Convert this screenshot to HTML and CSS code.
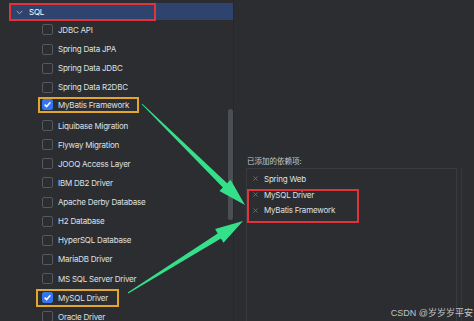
FILE: index.html
```html
<!DOCTYPE html>
<html>
<head>
  <meta charset="utf-8">
  <title>New Project - Dependencies</title>
  <link rel="stylesheet" href="styles.css">
</head>
<body>
  <div class="wizard">
    <div class="tree-pane">
      <div class="group-row">
        <span class="group-label">
          <svg class="chevron" width="7" height="5" viewBox="0 0 7 5"><path d="M0.8 1l2.7 2.7L6.2 1" fill="none" stroke="#aeb1b7" stroke-width="1"/></svg>
          SQL
        </span>
      </div>
      <ul class="dep-list">
        <li class="dep"><span class="checkbox"></span>JDBC API</li>
        <li class="dep"><span class="checkbox"></span>Spring Data JPA</li>
        <li class="dep"><span class="checkbox"></span>Spring Data JDBC</li>
        <li class="dep"><span class="checkbox"></span>Spring Data R2DBC</li>
        <li class="dep">
          <span class="mark mark-mybatis">
            <span class="checkbox checked"><svg width="9" height="9" viewBox="0 0 9 9"><path d="M1.6 4.6l2 2 3.8-4.3" fill="none" stroke="#fff" stroke-width="1.5"/></svg></span>MyBatis Framework
          </span>
        </li>
        <li class="dep"><span class="checkbox"></span>Liquibase Migration</li>
        <li class="dep"><span class="checkbox"></span>Flyway Migration</li>
        <li class="dep"><span class="checkbox"></span>JOOQ Access Layer</li>
        <li class="dep"><span class="checkbox"></span>IBM DB2 Driver</li>
        <li class="dep"><span class="checkbox"></span>Apache Derby Database</li>
        <li class="dep"><span class="checkbox"></span>H2 Database</li>
        <li class="dep"><span class="checkbox"></span>HyperSQL Database</li>
        <li class="dep"><span class="checkbox"></span>MariaDB Driver</li>
        <li class="dep"><span class="checkbox"></span>MS SQL Server Driver</li>
        <li class="dep">
          <span class="mark mark-mysql">
            <span class="checkbox checked"><svg width="9" height="9" viewBox="0 0 9 9"><path d="M1.6 4.6l2 2 3.8-4.3" fill="none" stroke="#fff" stroke-width="1.5"/></svg></span>MySQL Driver
          </span>
        </li>
        <li class="dep"><span class="checkbox"></span>Oracle Driver</li>
      </ul>
      <div class="scroll-thumb"></div>
    </div>

    <div class="added-pane">
      <div class="added-title">已添加的依赖项:</div>
      <div class="added-body">
        <div class="added-list">
          <div class="added-item">
            <svg class="remove" width="5" height="5" viewBox="0 0 5 5"><path d="M0.5 0.5l4 4M4.5 0.5l-4 4" stroke="#6c7077" stroke-width="0.9"/></svg>Spring Web
          </div>
          <div class="added-mark">
            <div class="added-item">
              <svg class="remove" width="5" height="5" viewBox="0 0 5 5"><path d="M0.5 0.5l4 4M4.5 0.5l-4 4" stroke="#6c7077" stroke-width="0.9"/></svg>MySQL Driver
            </div>
            <div class="added-item">
              <svg class="remove" width="5" height="5" viewBox="0 0 5 5"><path d="M0.5 0.5l4 4M4.5 0.5l-4 4" stroke="#6c7077" stroke-width="0.9"/></svg>MyBatis Framework
            </div>
          </div>
        </div>
        <div class="added-rule"></div>
      </div>
    </div>

    <!-- annotation arrows -->
    <svg class="arrows" width="474" height="321" viewBox="0 0 474 321">
      <polygon points="142.35,103.64 227.1,183.3 230.6,179.7 245,205 219.4,191.1 222.9,187.5 141.65,104.36" fill="#35e08a"/>
      <polygon points="127.73,292.58 217.7,233.4 215.1,229.1 243,221 223.5,242.7 220.9,238.4 128.27,293.42" fill="#35e08a"/>
    </svg>

    <div class="watermark">CSDN @岁岁岁平安</div>
  </div>
</body>
</html>
```

FILE: styles.css
```css
body {
  margin: 0;
  background-color: #2b2d30;
  color: #dfe1e5;
  font-family: 'Inter', 'Noto Sans', sans-serif;
  font-size: 8px;
  letter-spacing: -0.22px;
}

.wizard {
  position: relative;
  display: flex;
  width: 474px;
  height: 321px;
  overflow: hidden;
}

/* left: dependency tree */
.tree-pane {
  position: relative;
  flex-shrink: 0;
  width: 233px;
  padding-top: 3px;
  border-right: 1px solid #26282b;
}

.group-row {
  display: flex;
  height: 17.4px;
  margin-left: 9px;
  background-color: #2e436e;
}

.group-label {
  display: flex;
  align-items: center;
  gap: 6px;
  width: 147px;
  height: 18px;
  padding-left: 5px;
  box-sizing: border-box;
  border: 2px solid #e0343b;
  color: #ffffff;
}

.dep-list {
  list-style: none;
  margin: 0;
  padding: 0;
}

.dep {
  display: flex;
  align-items: center;
  gap: 5px;
  height: 19.14px;
  padding-left: 42px;
  white-space: nowrap;
}

.checkbox {
  display: flex;
  align-items: center;
  justify-content: center;
  flex-shrink: 0;
  width: 11px;
  height: 11px;
  box-sizing: border-box;
  border: 1px solid #55585e;
  border-radius: 2px;
}

.checkbox.checked {
  background-color: #3574f0;
  border-color: #3574f0;
}

.mark {
  display: flex;
  align-items: center;
  gap: 5px;
  box-sizing: border-box;
  border: 2px solid #e2a52e;
}

.mark-mybatis {
  height: 16px;
  margin-left: -4px;
  margin-top: -3px;
  padding: 0 8px 0 2px;
}

.mark-mysql {
  height: 18px;
  margin-left: -6px;
  padding: 0 9px 0 4px;
}

.scroll-thumb {
  position: absolute;
  top: 109px;
  right: 0;
  width: 5px;
  height: 111px;
  background-color: #4b4e53;
  border-radius: 3px;
}

/* right: added dependencies */
.added-pane {
  flex: 1;
  display: flex;
  flex-direction: column;
  padding-top: 155px;
  padding-left: 12px;
}

.added-title {
  padding-left: 1px;
  margin-bottom: 1px;
  line-height: 12px;
  font-family: 'Noto Sans CJK SC', sans-serif;
  font-size: 7.5px;
  letter-spacing: 0;
  color: #c4c7cc;
}

.added-body {
  flex: 1;
  display: flex;
  gap: 4px;
}

.added-list {
  width: 211px;
  box-sizing: border-box;
  padding-top: 2.2px;
  border: 1px solid #393b40;
  border-bottom: none;
}

.added-item {
  display: flex;
  align-items: center;
  gap: 6px;
  height: 15.6px;
  padding-left: 6px;
  white-space: nowrap;
}

.added-mark {
  width: 112px;
  box-sizing: border-box;
  margin-top: 2.5px;
  padding-bottom: 3.3px;
  border: 2px solid #e0343b;
}

.added-mark .added-item {
  padding-left: 4px;
}

.added-mark .added-item:first-child {
  margin-top: -4.5px;
}

.added-rule {
  width: 1px;
  background-color: #35373c;
}

.arrows {
  position: absolute;
  top: 0;
  left: 0;
  pointer-events: none;
}

.watermark {
  position: absolute;
  right: 1px;
  bottom: 2px;
  line-height: 11px;
  font-family: 'Liberation Sans', 'Noto Sans CJK SC', sans-serif;
  font-size: 9px;
  letter-spacing: 0;
  color: rgba(255, 255, 255, 0.72);
}
```
